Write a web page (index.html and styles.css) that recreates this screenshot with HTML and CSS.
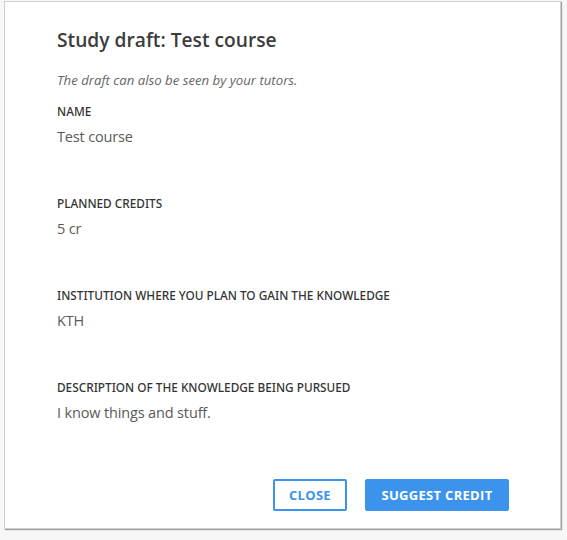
FILE: index.html
```html
<!DOCTYPE html>
<html>
<head>
<meta charset="utf-8">
<link rel="stylesheet" href="styles.css">
</head>
<body>
<div class="page">
  <div class="modal">
    <h1 class="title">Study draft: Test course</h1>
    <p class="note">The draft can also be seen by your tutors.</p>
    <div class="fields">
      <div class="field">
        <div class="label">NAME</div>
        <div class="value">Test course</div>
      </div>
      <div class="field">
        <div class="label">PLANNED CREDITS</div>
        <div class="value">5 cr</div>
      </div>
      <div class="field">
        <div class="label">INSTITUTION WHERE YOU PLAN TO GAIN THE KNOWLEDGE</div>
        <div class="value">KTH</div>
      </div>
      <div class="field">
        <div class="label">DESCRIPTION OF THE KNOWLEDGE BEING PURSUED</div>
        <div class="value">I know things and stuff.</div>
      </div>
    </div>
    <div class="actions">
      <button class="btn btn-outline">CLOSE</button>
      <button class="btn btn-primary">SUGGEST CREDIT</button>
    </div>
  </div>
</div>
</body>
</html>
```
FILE: styles.css
```css
html, body {
  margin: 0;
  padding: 0;
  background: #f7f7f7;
  font-family: "Open Sans", "Noto Sans", sans-serif;
}
.page {
  padding: 1px 0 0 4px;
  height: 540px;
  box-sizing: border-box;
}
.modal {
  width: 557px;
  height: 528px;
  box-sizing: border-box;
  background: #fff;
  border: 1px solid #cfcfcf;
  box-shadow: 1px 1px 1px rgba(0,0,0,0.35);
  padding: 24px 52px 0 52px;
  display: flex;
  flex-direction: column;
}
.title {
  margin: 0;
  font-size: 19.2px;
  font-weight: 600;
  line-height: 28px;
  color: #3c3c3c;
}
.note {
  margin: 17px 0 0 0;
  font-size: 13.2px;
  font-style: italic;
  line-height: 18px;
  color: #666;
}
.fields {
  display: flex;
  flex-direction: column;
  gap: 48px;
  margin-top: 14px;
}
.label {
  font-family: "Noto Sans", "Open Sans", sans-serif;
  font-size: 11.8px;
  font-weight: 500;
  line-height: 16px;
  color: #333;
}
.value {
  margin-top: 8px;
  font-size: 14.5px;
  letter-spacing: -0.15px;
  line-height: 20px;
  color: #5a5a5a;
}
.actions {
  margin-top: auto;
  margin-bottom: 17px;
  margin-right: -1px;
  display: flex;
  justify-content: flex-end;
  gap: 18px;
}
.btn {
  height: 32px;
  box-sizing: border-box;
  font-family: inherit;
  font-size: 13px;
  font-weight: 700;
  letter-spacing: 0.3px;
  border-radius: 2px;
  cursor: pointer;
}
.btn-outline {
  width: 74px;
  background: #fff;
  color: #3b93ec;
  border: 2px solid #3b93ec;
}
.btn-primary {
  width: 144px;
  background: #3b93ec;
  color: #fff;
  border: 1px solid #3b93ec;
}
```
